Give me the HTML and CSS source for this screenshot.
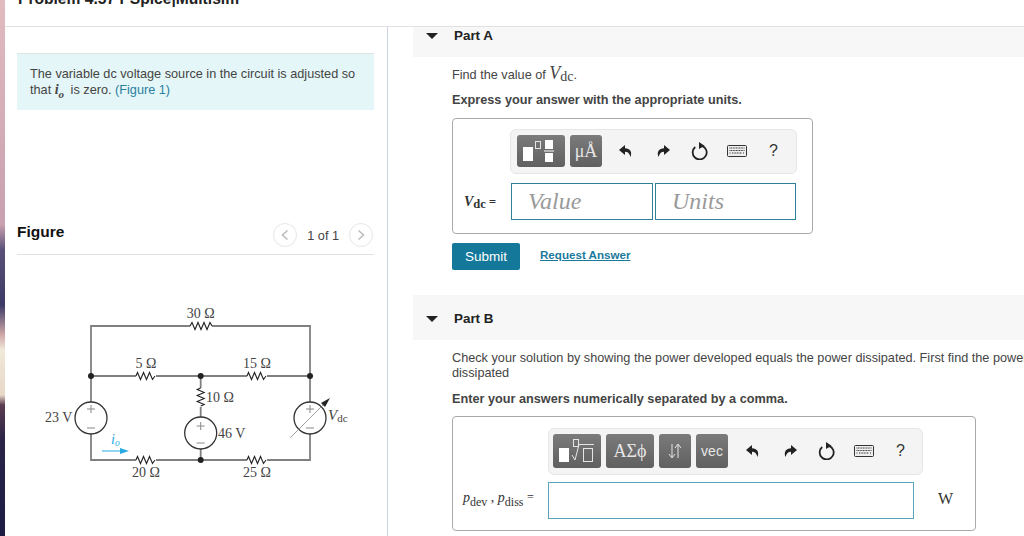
FILE: index.html
```html
<!DOCTYPE html>
<html lang="en">
<head>
    <meta charset="UTF-8">
    <title>Problem 4.57 PSpice|Multisim</title>
    <link rel="stylesheet" href="styles.css">
</head>
<body>
    <div class="strip"></div>
    <div class="page">
        <header class="top">
            <h1>Problem 4.57 PSpice|Multisim</h1>
        </header>
        <div class="columns">
            <section class="left">
                <div class="intro">The variable dc voltage source in the circuit is adjusted so that <i class="math">i<sub>o</sub></i> is zero. <a href="#">(Figure 1)</a></div>
                <div class="figure-head">
                    <h2>Figure</h2>
                    <div class="pager">
                        <span class="pager-btn">
                            <svg width="10" height="12" viewBox="0 0 10 12"><path d="M7.5 1.5 L2.5 6 L7.5 10.5"/></svg>
                        </span>
                        <span class="pager-text">1 of 1</span>
                        <span class="pager-btn">
                            <svg width="10" height="12" viewBox="0 0 10 12"><path d="M2.5 1.5 L7.5 6 L2.5 10.5"/></svg>
                        </span>
                    </div>
                </div>
                <svg class="circuit" width="357" height="281" viewBox="17 255 357 281">
                    <g class="wire">
                        <path d="M190 326 H91 V402 M91 434 V460 H136 M156 460 H247 M267 460 H310 V434 M310 402 V326 H212"/>
                        <path d="M91 376 H136 M156 376 H247 M267 376 H310"/>
                        <path d="M200.7 376 V388 M200.7 407 V417 M200.7 449 V460"/>
                    </g>
                    <g class="res">
                        <path d="M190 326 l2 -3.500 l3 7 l3 -7 l3 7 l3 -7 l3 7 l3 -7 l2 3.500"/>
                        <path d="M136 376 l1.500 -3.500 l3 7 l3 -7 l3 7 l3 -7 l3 7 l2.500 -3.500"/>
                        <path d="M247 376 l1.500 -3.500 l3 7 l3 -7 l3 7 l3 -7 l3 7 l2.500 -3.500"/>
                        <path d="M136 460 l1.500 -3.500 l3 7 l3 -7 l3 7 l3 -7 l3 7 l2.500 -3.500"/>
                        <path d="M247 460 l1.500 -3.500 l3 7 l3 -7 l3 7 l3 -7 l3 7 l2.500 -3.500"/>
                        <path d="M200.700 388 l-3.500 1.500 l7 3 l-7 3 l7 3 l-7 3 l7 3 l-3.500 1.500"/>
                    </g>
                    <g class="source">
                        <circle cx="91" cy="418" r="16"/>
                        <circle cx="200.7" cy="433" r="16"/>
                        <circle cx="310" cy="418" r="16"/>
                    </g>
                    <g class="sign">
                        <path d="M87 409 h8 M91 405 v8 M87 428 h8"/>
                        <path d="M196.700 426 h8 M200.700 422 v8 M196.700 443 h8"/>
                        <path d="M306 409 h8 M310 405 v8 M306 428 h8"/>
                    </g>
                    <path class="thin" d="M290 438 L326 402"/>
                    <path class="head" d="M330 398 L321 403 L325 407 Z"/>
                    <g class="dots">
                        <circle cx="91" cy="376" r="3"/>
                        <circle cx="200.7" cy="376" r="3"/>
                        <circle cx="310" cy="376" r="3"/>
                        <circle cx="200.7" cy="460" r="3"/>
                    </g>
                    <path class="cur" d="M102 451 H122"/>
                    <path class="cur-head" d="M129 451 L120 448 V454 Z"/>
                    <text class="lbl cur-lbl" x="111" y="444">i<tspan class="sub" dy="2">o</tspan></text>
                    <text class="lbl mid" x="200.700" y="318">30 Ω</text>
                    <text class="lbl mid" x="146" y="368">5 Ω</text>
                    <text class="lbl mid" x="257" y="368">15 Ω</text>
                    <text class="lbl" x="206" y="402">10 Ω</text>
                    <text class="lbl" x="45" y="422">23 V</text>
                    <text class="lbl" x="218" y="438">46 V</text>
                    <text class="lbl mid" x="146" y="477">20 Ω</text>
                    <text class="lbl mid" x="257" y="477">25 Ω</text>
                    <text class="lbl" x="328" y="420"><tspan class="ital">V</tspan><tspan class="sub-dc" dy="2">dc</tspan></text>
                </svg>
            </section>
            <main class="right">
                <div class="part-bar part-a">
                    <span class="caret"></span>
                    <h3>Part A</h3>
                </div>
                <div class="part-body">
                    <p class="prompt">Find the value of <span class="var">V</span><span class="var-sub">dc</span>.</p>
                    <p class="hint">Express your answer with the appropriate units.</p>
                    <div class="answer answer-a">
                        <div class="toolbar toolbar-a">
                            <span class="tool tool-wide">
                                <svg width="38" height="24" viewBox="0 0 38 24">
                                    <rect class="fill" x="1" y="8" width="10" height="14"/>
                                    <rect class="line" x="13.500" y="2.500" width="5" height="7"/>
                                    <rect class="fill" x="23" y="1" width="8" height="9"/>
                                    <rect class="fill" x="22" y="11.500" width="10" height="1"/>
                                    <rect class="fill" x="23" y="14" width="8" height="9"/>
                                </svg>
                            </span>
                            <span class="tool tool-unit">μÅ</span>
                            <div class="actions">
                                <span class="cell"><svg class="act" width="16" height="16" viewBox="0 0 16 16"><use href="#undo"/></svg></span>
                                <span class="cell"><svg class="act" width="16" height="16" viewBox="0 0 16 16"><use href="#redo"/></svg></span>
                                <span class="cell"><svg class="act" width="18" height="18" viewBox="0 0 18 18"><use href="#reset"/></svg></span>
                                <span class="cell"><svg class="act" width="20" height="12" viewBox="0 0 20 12"><use href="#keys"/></svg></span>
                                <span class="cell help">?</span>
                            </div>
                        </div>
                        <div class="answer-row">
                            <span class="label-a"><span class="label-v">V</span><span class="label-sub">dc</span> =</span>
                            <input class="field field-value" placeholder="Value">
                            <input class="field field-units" placeholder="Units">
                        </div>
                    </div>
                    <div class="submit-row">
                        <button class="submit" type="button">Submit</button>
                        <a class="request" href="#">Request Answer</a>
                    </div>
                </div>
                <div class="part-bar part-b">
                    <span class="caret"></span>
                    <h3>Part B</h3>
                </div>
                <div class="part-body">
                    <p class="prompt prompt-b">Check your solution by showing the power developed equals the power dissipated. First find the power dissipated</p>
                    <p class="hint hint-b">Enter your answers numerically separated by a comma.</p>
                    <div class="answer answer-b">
                        <div class="toolbar toolbar-b">
                            <span class="tool tool-wide">
                                <svg width="38" height="26" viewBox="0 0 38 26">
                                    <rect class="fill" x="1" y="10" width="10" height="14"/>
                                    <rect class="line" x="15.500" y="1.500" width="5" height="7"/>
                                    <path class="line" d="M14 17 L17 22 L21 6.500 H36"/>
                                    <rect class="line" x="25.500" y="10.500" width="9" height="13"/>
                                </svg>
                            </span>
                            <span class="tool tool-wide tool-greek">ΑΣϕ</span>
                            <span class="tool tool-small">
                                <svg width="18" height="18" viewBox="0 0 18 18">
                                    <path class="line" d="M6 2 V15 M3 12 L6 16 L9 12 M12 16 V3 M9 6 L12 2 L15 6"/>
                                </svg>
                            </span>
                            <span class="tool tool-small tool-vec">vec</span>
                            <div class="actions">
                                <span class="cell"><svg class="act" width="16" height="16" viewBox="0 0 16 16"><use href="#undo"/></svg></span>
                                <span class="cell"><svg class="act" width="16" height="16" viewBox="0 0 16 16"><use href="#redo"/></svg></span>
                                <span class="cell"><svg class="act" width="18" height="18" viewBox="0 0 18 18"><use href="#reset"/></svg></span>
                                <span class="cell"><svg class="act" width="20" height="12" viewBox="0 0 20 12"><use href="#keys"/></svg></span>
                                <span class="cell help">?</span>
                            </div>
                        </div>
                        <div class="answer-row row-b">
                            <span class="label-b"><i>p</i><sub>dev</sub> , <i>p</i><sub>diss</sub> <span class="eq">=</span></span>
                            <input class="field field-power">
                            <span class="unit">W</span>
                        </div>
                    </div>
                </div>
            </main>
        </div>
    </div>

    <svg class="defs" width="0" height="0">
        <symbol id="undo" viewBox="0 0 16 16">
            <path d="M7 2 L1 7 L7 12 V8.800 C10 8.800 11.500 10.500 12.500 14 C14.500 9 12 5.200 7 5.200 Z"/>
        </symbol>
        <symbol id="redo" viewBox="0 0 16 16">
            <path d="M9 2 L15 7 L9 12 V8.800 C6 8.800 4.500 10.500 3.500 14 C1.500 9 4 5.200 9 5.200 Z"/>
        </symbol>
        <symbol id="reset" viewBox="0 0 18 18">
            <path class="arc" d="M11 3.800 A7 7 0 1 1 4.200 5"/>
            <path d="M8 0 L13.500 3.800 L8 7 Z"/>
        </symbol>
        <symbol id="keys" viewBox="0 0 20 12">
            <rect class="key-box" x="0.500" y="0.500" width="19" height="11" rx="1"/>
            <path class="key-dots" d="M2.500 3 H17.500 M2.500 5.500 H17.500 M2.500 8 H4 M5 8 H15 M16 8 H17.500"/>
        </symbol>
    </svg>
</body>
</html>
```

FILE: styles.css
```css
html, body {
    height: 536px;
}
body {
    margin: 0;
    display: flex;
    overflow: hidden;
    background: #fff;
    font-family: "Liberation Sans", Arial, sans-serif;
    font-size: 12.7px;
    color: #333;
}
.strip {
    flex: 0 0 5px;
    background: linear-gradient(to bottom, #e0bcc0 0, #c8a0b0 225px, #5a5078 250px, #3c3a66 305px, #d0a8a8 335px, #f0e8d8 350px, #e8d8c8 395px, #5c3c50 405px, #2a2448 440px, #1c1c44 536px);
}
.page {
    flex: 1;
    min-width: 0;
    display: flex;
    flex-direction: column;
}
.top {
    height: 26px;
    flex: none;
    overflow: hidden;
    border-bottom: 1px solid #e2e2e2;
}
.top h1 {
    margin: -13px 0 0 13px;
    font-size: 15.6px;
    line-height: 24px;
    color: #222;
}
.columns {
    flex: 1;
    display: flex;
    min-height: 0;
}

/* left column */
.left {
    flex: 0 0 383px;
    box-sizing: border-box;
    padding: 26px 13px 0 12px;
    border-right: 1px solid #c9d2de;
}
.intro {
    height: 57px;
    box-sizing: border-box;
    padding: 13px 13px 0;
    border-top: 1px solid #dfe5e5;
    background: #e4f6f7;
    line-height: 15px;
    color: #444;
}
.intro a {
    color: #2b7f9f;
    text-decoration: none;
}
.math {
    margin-right: 3px;
    font-family: "Liberation Serif", serif;
    font-weight: bold;
    font-size: 14px;
}
.math sub {
    font-size: 11px;
    line-height: 0;
}
.figure-head {
    height: 34px;
    box-sizing: border-box;
    margin-top: 111px;
    display: flex;
    align-items: center;
    justify-content: space-between;
    border-bottom: 1px solid #e2e2e2;
}
.figure-head h2 {
    margin: 0 0 11px;
    font-size: 15.5px;
    color: #111;
}
.pager {
    display: flex;
    align-items: center;
    margin: 0 1px 5px 0;
}
.pager-btn {
    width: 24px;
    height: 24px;
    box-sizing: border-box;
    border: 1px solid #e6e6e6;
    border-radius: 50%;
    display: flex;
    align-items: center;
    justify-content: center;
}
.pager-btn path {
    fill: none;
    stroke: #bdbdbd;
    stroke-width: 1.6;
}
.pager-text {
    margin: 2px 10px 0;
    color: #444;
}
.circuit {
    display: block;
    overflow: visible;
}
.wire path {
    fill: none;
    stroke: #808080;
    stroke-width: 1.8;
}
.res path {
    fill: none;
    stroke: #222;
    stroke-width: 1.1;
}
.source circle {
    fill: #fff;
    stroke: #333;
    stroke-width: 1.3;
}
.sign path {
    fill: none;
    stroke: #888;
    stroke-width: 1;
}
.thin {
    stroke: #888;
    stroke-width: 0.8;
}
.head {
    fill: #222;
}
.dots circle {
    fill: #222;
}
.cur {
    stroke: #29abe2;
    stroke-width: 1;
}
.cur-head {
    fill: #29abe2;
}
.lbl {
    font-family: "Liberation Serif", serif;
    font-size: 14px;
    fill: #444;
}
.mid {
    text-anchor: middle;
}
.cur-lbl {
    fill: #29abe2;
    font-style: italic;
}
.ital {
    font-style: italic;
    font-size: 15px;
}
.sub {
    font-size: 9.5px;
}
.sub-dc {
    font-size: 11px;
}

/* right column */
.right {
    flex: 1;
    min-width: 0;
    padding-left: 25px;
    overflow: hidden;
}
.part-bar {
    display: flex;
    background: #f7f7f7;
    padding-left: 13px;
    box-sizing: border-box;
}
.part-a {
    height: 30px;
    padding-top: 1px;
}
.part-b {
    height: 45px;
    margin-top: 25px;
    padding-top: 16px;
}
.part-bar h3 {
    margin: 1px 0 0;
    font-size: 13.4px;
    line-height: 14px;
    color: #222;
}
.caret {
    width: 0;
    height: 0;
    margin: 5px 16px 0 0;
    border-left: 6px solid transparent;
    border-right: 6px solid transparent;
    border-top: 6px solid #222;
}
.part-body {
    padding-left: 39px;
}
.prompt {
    margin: 0;
    padding-top: 7px;
    line-height: 18px;
    color: #444;
}
.prompt-b {
    padding-top: 11px;
    width: 590px;
    line-height: 15px;
}
.var {
    font-family: "Liberation Serif", serif;
    font-style: italic;
    font-size: 18px;
}
.var-sub {
    font-family: "Liberation Serif", serif;
    font-size: 14px;
    position: relative;
    top: 2px;
}
.hint {
    margin: 8px 0 0;
    line-height: 16px;
    font-weight: bold;
    color: #444;
}
.hint-b {
    margin-top: 10px;
}
.answer {
    box-sizing: border-box;
    border: 1px solid #aaa;
    border-radius: 4px;
}
.answer-a {
    width: 361px;
    height: 116px;
    margin-top: 10px;
    padding-top: 10px;
}
.answer-b {
    width: 524px;
    height: 115px;
    margin-top: 9px;
    padding-top: 11px;
}
.toolbar {
    display: flex;
    align-items: center;
    box-sizing: border-box;
    background: #f4f4f4;
    border: 1px solid #e6e6e6;
    border-radius: 6px;
    gap: 5px;
    padding-bottom: 1px;
}
.toolbar-a {
    width: 287px;
    height: 45px;
    margin-left: 57px;
    padding-left: 6px;
}
.toolbar-b {
    width: 375px;
    height: 47px;
    margin-left: 95px;
    padding-left: 4px;
}
.tool {
    display: flex;
    align-items: center;
    justify-content: center;
    height: 32px;
    border-radius: 3px;
    background: linear-gradient(to bottom, #7b7b7b, #606060);
    color: #e6e6e6;
}
.toolbar-b .tool {
    height: 34px;
}
.tool-wide {
    width: 48px;
}
.tool-unit {
    width: 32px;
    font-family: "Liberation Serif", serif;
    font-size: 18px;
}
.tool-small {
    width: 32px;
}
.tool-greek {
    font-family: "Liberation Serif", serif;
    font-size: 18px;
}
.tool-vec {
    font-size: 14px;
}
.tool .fill {
    fill: #fff;
}
.tool .line {
    fill: none;
    stroke: #e6e6e6;
    stroke-width: 1;
}
.actions {
    display: flex;
    align-items: center;
}
.toolbar-b .actions {
    margin-left: 1px;
}
.cell {
    width: 37px;
    display: flex;
    align-items: center;
    justify-content: center;
}
.act {
    fill: #222;
}
.help {
    font-size: 16px;
    color: #333;
}
.arc {
    fill: none;
    stroke: #222;
    stroke-width: 1.8;
}
.key-box {
    fill: #eee;
    stroke: #333;
    stroke-width: 1;
}
.key-dots {
    fill: none;
    stroke: #333;
    stroke-width: 1.2;
    stroke-dasharray: 1 0.6;
}
.defs {
    position: absolute;
}
.answer-row {
    display: flex;
    align-items: center;
    margin-top: 9px;
}
.row-b {
    margin-top: 7px;
}
.label-a {
    flex: none;
    box-sizing: border-box;
    width: 58px;
    padding-left: 11px;
    font-family: "Liberation Serif", serif;
    font-weight: bold;
    font-size: 12.5px;
    white-space: nowrap;
}
.label-v {
    font-style: italic;
    font-size: 14px;
}
.label-sub {
    position: relative;
    top: 2px;
}
.field {
    box-sizing: border-box;
    height: 37px;
    border: 1px solid #2f8099;
    padding: 0 0 0 16px;
    margin: 0;
    background: #fff;
    font-family: "Liberation Serif", serif;
    font-style: italic;
    font-size: 24px;
    outline: none;
}
.field::placeholder {
    color: #9a9a9a;
    opacity: 1;
}
.field-value {
    width: 142px;
    margin-right: 2px;
}
.field-units {
    width: 141px;
}
.field-power {
    width: 366px;
    border-color: #5aa5bb;
}
.label-b {
    flex: none;
    box-sizing: border-box;
    width: 95px;
    padding: 0 0 6px 10px;
    font-family: "Liberation Serif", serif;
    font-size: 14px;
    white-space: nowrap;
}
.label-b sub {
    font-size: 12px;
    line-height: 0;
}
.eq {
    font-size: 12px;
    position: relative;
    top: -1px;
}
.unit {
    margin: -3px 0 0 24px;
    font-family: "Liberation Serif", serif;
    font-size: 16px;
}
.submit-row {
    display: flex;
    align-items: center;
    margin-top: 9px;
}
.submit {
    width: 68px;
    height: 27px;
    border: 0;
    border-radius: 2px;
    background: #14789a;
    color: #fff;
    font-family: "Liberation Sans", Arial, sans-serif;
    font-size: 13.5px;
}
.request {
    margin-left: 20px;
    margin-top: -5px;
    font-size: 11.6px;
    font-weight: bold;
    color: #1a7a9e;
}
```
